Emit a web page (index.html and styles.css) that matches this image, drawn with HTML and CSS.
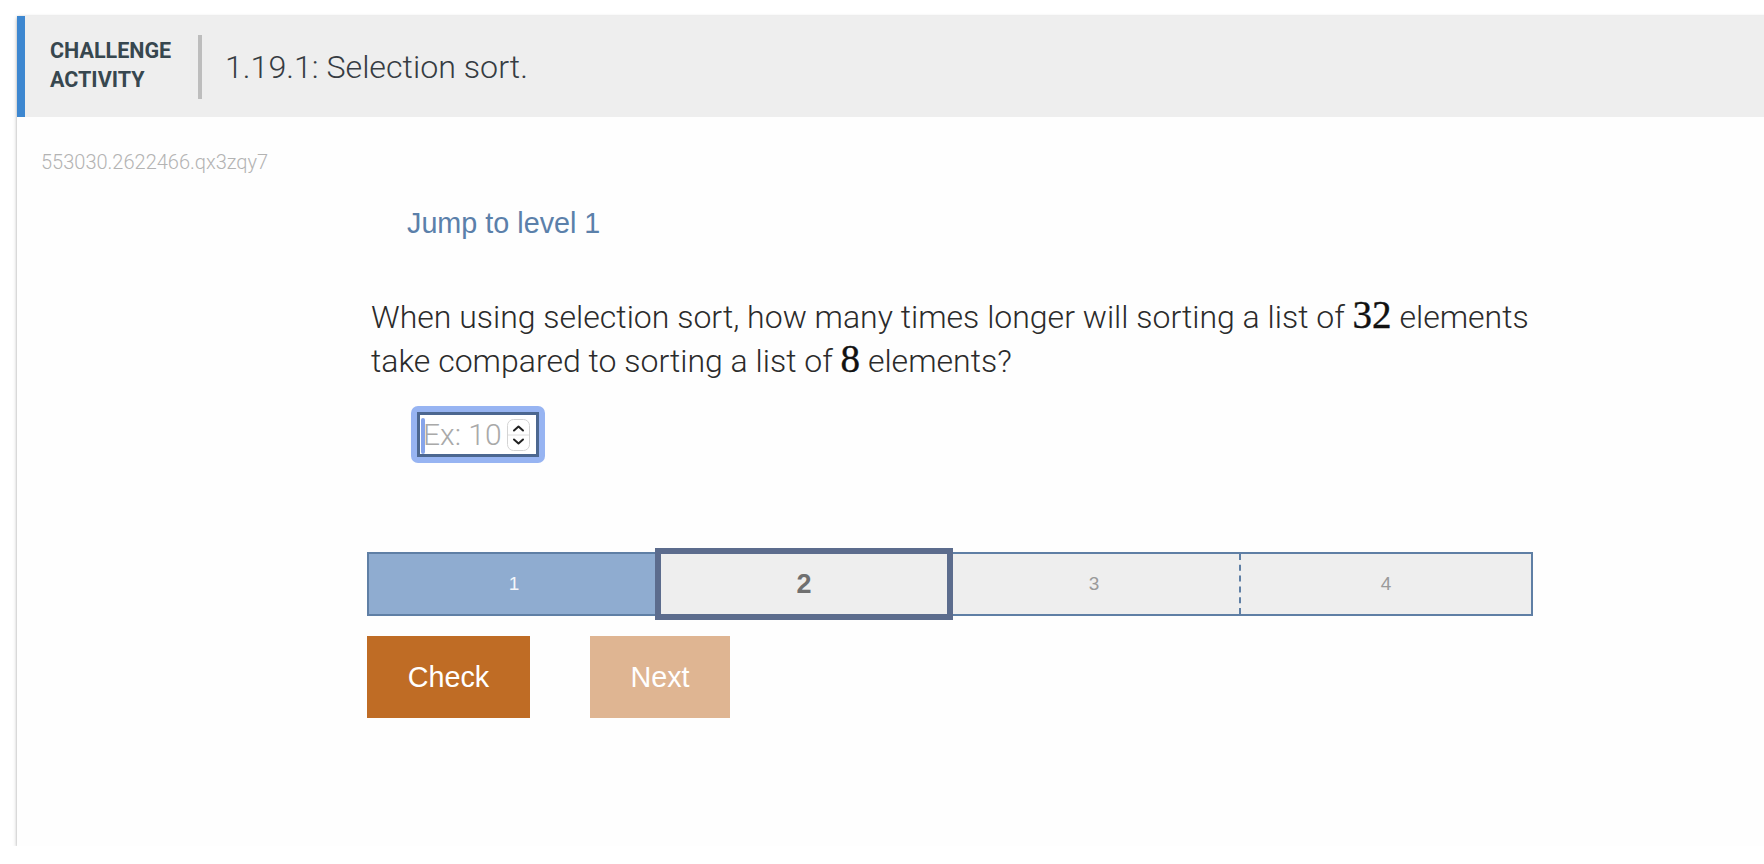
FILE: index.html
```html
<!DOCTYPE html>
<html>
<head>
<meta charset="utf-8">
<link rel="stylesheet" href="styles.css">
</head>
<body>
<div class="card">
  <div class="header">
    <div class="label">CHALLENGE<br>ACTIVITY</div>
    <div class="divider"></div>
    <h1 class="title">1.19.1: Selection sort.</h1>
  </div>
  <div class="body">
    <div class="code">553030.2622466.qx3zqy7</div>
    <div class="content">
      <div class="jump">Jump to level 1</div>
      <p class="question">When using selection sort, how many times longer will sorting a list of <span class="math">32</span> elements take compared to sorting a list of <span class="math">8</span> elements?</p>
      <div class="answer">
        <span class="ring">
          <span class="field">
            <span class="caret"></span>
            <span class="ph">Ex: 10</span>
            <svg class="spin" width="23" height="32" viewBox="0 0 23 32">
              <rect x="0.5" y="0.5" width="22" height="31" rx="6" fill="#fff" stroke="#d4d4d4"/>
              <line x1="1" y1="16" x2="22" y2="16" stroke="#dedede"/>
              <path d="M7 11.5 L11.5 7.5 L16 11.5" fill="none" stroke="#222" stroke-width="2" stroke-linecap="round" stroke-linejoin="round"/>
              <path d="M7 20.5 L11.5 24.5 L16 20.5" fill="none" stroke="#222" stroke-width="2" stroke-linecap="round" stroke-linejoin="round"/>
            </svg>
          </span>
        </span>
      </div>
      <div class="levels">
        <div class="seg done">1</div>
        <div class="seg current">2</div>
        <div class="seg">3</div>
        <div class="seg dashed">4</div>
      </div>
      <div class="actions">
        <button class="btn check">Check</button>
        <button class="btn next">Next</button>
      </div>
    </div>
  </div>
</div>
</body>
</html>
```
FILE: styles.css
```css
html, body {
  margin: 0;
  padding: 0;
  background: #ffffff;
  overflow: hidden;
}
body {
  font-family: Roboto, "Liberation Sans", sans-serif;
}
.card {
  margin: 16px -30px 0 17px;
  height: 830px;
  background: #fefefe;
  box-shadow: 0 2px 4px rgba(0,0,0,0.28), 0 0 2px rgba(0,0,0,0.12);
  box-sizing: border-box;
}
.header {
  height: 101px;
  background: #eeeeee;
  border-left: 8px solid #3d87d0;
  display: flex;
  align-items: center;
  padding-left: 25px;
  box-sizing: border-box;
}
.label {
  font-family: Roboto, sans-serif;
  font-weight: 700;
  font-size: 21.5px;
  line-height: 29px;
  color: #37474f;
  width: 148px;
  margin-top: -3px;
}
.divider {
  width: 4px;
  height: 64px;
  background: #bdbdbd;
}
.title {
  margin: 0 0 0 23px;
  font-family: Roboto, sans-serif;
  font-weight: 300;
  font-size: 32.2px;
  color: #363c42;
  line-height: 40px;
}
.body {
  padding: 34px 0 0 24px;
}
.code {
  font-size: 20px;
  line-height: 22px;
  color: #b3b3b3;
  font-weight: 300;
}
.content {
  margin-left: 326px;
  width: 1166px;
}
.jump {
  margin-top: 33px;
  padding-left: 40px;
  font-family: "Liberation Sans", Arial, sans-serif;
  font-size: 28.75px;
  line-height: 34px;
  color: #5b80aa;
}
.question {
  margin: 55px 0 0 0;
  padding-left: 4px;
  width: 1190px;
  font-family: Roboto, sans-serif;
  font-weight: 300;
  font-size: 32px;
  line-height: 44px;
  color: #2b2b2b;
}
.math {
  font-family: "Liberation Serif", "DejaVu Serif", serif;
  font-size: 1.22em;
  line-height: 1;
  font-weight: 400;
  color: #111;
  -webkit-text-stroke: 0.4px #111;
}
.answer {
  margin-top: 23px;
  padding-left: 44px;
  height: 57px;
}
.ring {
  display: inline-block;
  padding: 6px;
  background: #97b4f2;
  border-radius: 7px;
}
.field {
  position: relative;
  display: flex;
  align-items: center;
  width: 122px;
  height: 45px;
  border: 3px solid #4c6790;
  background: #fff;
  box-sizing: border-box;
  padding-left: 3px;
}
.caret {
  position: absolute;
  left: 1px;
  top: 3px;
  width: 4px;
  height: 36px;
  border-radius: 2px;
  background: #86a4ea;
}
.ph {
  font-family: Roboto, sans-serif;
  font-weight: 300;
  font-size: 30px;
  color: #a9a9a9;
  line-height: 38px;
}
.spin {
  margin-left: 5px;
  display: block;
}
.levels {
  margin-top: 89px;
  display: flex;
  height: 64px;
  border: 2px solid #5f7fa5;
  background: #eeeeee;
  box-sizing: border-box;
}
.seg {
  position: relative;
  flex: 1;
  display: flex;
  align-items: center;
  justify-content: center;
  font-family: "Liberation Sans", Arial, sans-serif;
  font-size: 19px;
  color: #9a9a9a;
}
.seg.done {
  background: #8facd0;
  color: #f4f6fa;
}
.seg.current {
  font-size: 27px;
  font-weight: 700;
  color: #707070;
}
.seg.current::after {
  content: "";
  position: absolute;
  top: -6px;
  bottom: -6px;
  left: -4px;
  right: -4px;
  border: 6px solid #5c6c8d;
}
.seg.dashed {
  border-left: 2px dashed #5f7fa5;
}
.actions {
  margin-top: 20px;
  display: flex;
  gap: 60px;
}
.btn {
  border: none;
  height: 82px;
  padding: 0;
  font-family: "Liberation Sans", Arial, sans-serif;
  font-size: 28.75px;
  color: #ffffff;
  cursor: pointer;
}
.btn.check {
  width: 163px;
  background: #bf6c25;
}
.btn.next {
  width: 140px;
  background: #dfb592;
}
```
